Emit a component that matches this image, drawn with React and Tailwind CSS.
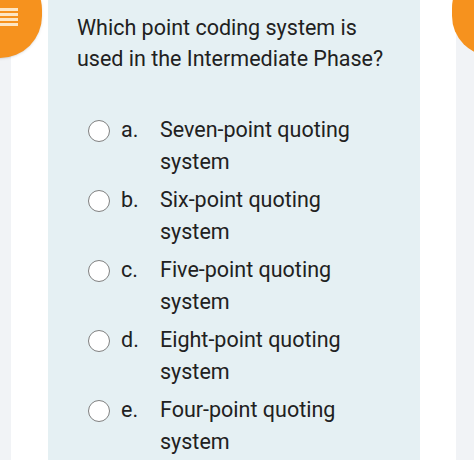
import { useState } from "react";

const options = [
  { key: "a", text: "Seven-point quoting system" },
  { key: "b", text: "Six-point quoting system" },
  { key: "c", text: "Five-point quoting system" },
  { key: "d", text: "Eight-point quoting system" },
  { key: "e", text: "Four-point quoting system" },
];

const App = () => {
  const [picked, setPicked] = useState(null);

  return (
    <div className="relative h-[463px] w-[474px] overflow-hidden bg-white font-['Roboto',sans-serif] text-[#212121]">
      <div className="flex h-[460px]">
        <div className="w-[11px] bg-[#f1f3f6]" />
        <div className="w-[37px]" />
        <div className="w-[372px] bg-[#e5f0f3] pl-[29px] pr-4 pt-[12px]">
          <p className="w-[318px] text-[21.5px] leading-[31px]">
            Which point coding system is used in the Intermediate Phase?
          </p>
          <div className="mt-[40px] flex flex-col gap-[6px] pl-[11px]">
            {options.map((o) => (
              <label
                key={o.key}
                className="flex cursor-pointer items-start"
                onClick={() => setPicked(o.key)}
              >
                <span className="mt-[6px] flex h-[22px] w-[22px] shrink-0 items-center justify-center rounded-full border-[1.5px] border-[#808080] bg-white">
                  {picked === o.key && <span className="h-[10px] w-[10px] rounded-full bg-[#1a73e8]" />}
                </span>
                <span className="ml-[11px] w-[39px] text-[21.5px] leading-[32px]">{o.key}.</span>
                <span className="w-[210px] text-[21.5px] leading-[32px]">{o.text}</span>
              </label>
            ))}
          </div>
        </div>
        <div className="w-[36px]" />
        <div className="flex-1 bg-[#f1f3f6]" />
      </div>

      {/* orange menu bubbles sticking in from the corners */}
      <div className="absolute -left-[42px] -top-[32px] h-[90px] w-[84px] rounded-full bg-[#f6921e] shadow-sm">
        <div className="absolute left-[42px] top-[40px] flex w-[18px] flex-col gap-[2px]">
          <span className="h-[3px] bg-[#fde6c4]" />
          <span className="h-[3px] bg-[#fde6c4]" />
          <span className="h-[3px] bg-[#fde6c4]" />
          <span className="h-[3px] bg-[#fde6c4]" />
        </div>
      </div>
      <div className="absolute -top-[32px] left-[452px] h-[88px] w-[80px] rounded-full bg-[#f6921e]" />
    </div>
  );
};

export default App;
